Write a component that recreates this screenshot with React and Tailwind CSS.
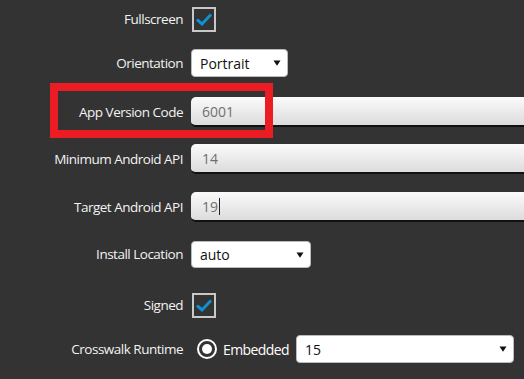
import React from 'react';

const font = { fontFamily: '"Open Sans", "Noto Sans", sans-serif' };

function Check() {
  return (
    <div className="w-[24px] h-[25px] border-2 border-[#c8c8c8] flex items-center justify-center ml-[1px]">
      <svg width="16" height="14" viewBox="0 0 16 14">
        <path d="M2 7.5 L6 11 L14 2.5" fill="none" stroke="#0e90d2" strokeWidth="3" strokeLinecap="square" />
      </svg>
    </div>
  );
}

function Arrow() {
  return (
    <svg width="8" height="6" viewBox="0 0 8 6" className="shrink-0">
      <path d="M0.5 0.5 L7.5 0.5 L4 5.8 Z" fill="#111" />
    </svg>
  );
}

function Select({ value, width, height = 'h-[28px]' }) {
  return (
    <div className={`${width} ${height} bg-white rounded-[4px] border border-[#bbb] flex items-center justify-between pl-[8px] pr-[6px] text-[14px] text-[#111]`}>
      <span>{value}</span>
      <Arrow />
    </div>
  );
}

function TextInput({ value, caret }) {
  return (
    <div className="flex-1 h-[30px] rounded-l-[5px] bg-gradient-to-b from-[#fbfbfb] to-[#dcdcdc] border-b-2 border-[#111] flex items-center pl-[11px] text-[14px] text-[#707070]">
      <span>{value}</span>
      {caret && <span className="w-[1px] h-[17px] bg-[#222] ml-[1px]" />}
    </div>
  );
}

function Row({ label, children, className = '' }) {
  return (
    <div className={`flex items-center ${className}`}>
      <div className="w-[184px] shrink-0 text-right pr-[1px] text-[13.5px] tracking-[-0.5px] text-[#f2f2f2]">{label}</div>
      <div className="flex-1 flex items-center pl-[7px]">{children}</div>
    </div>
  );
}

export default function App() {
  return (
    <div className="w-[524px] h-[379px] bg-[#333333] overflow-hidden" style={font}>
      <Row label="Fullscreen" className="pt-[7px] h-[32px]">
        <Check />
      </Row>
      <Row label="Orientation" className="mt-[17px] h-[28px]">
        <Select value="Portrait" width="w-[97px]" />
      </Row>
      <div className="relative mt-[20px]">
        <div className="absolute left-[50px] top-[-14px] w-[223px] h-[55px] border-[8px] border-[#ec1c24] pointer-events-none z-10" />
        <Row label="App Version Code" className="h-[30px]">
          <TextInput value="6001" />
        </Row>
      </div>
      <Row label="Minimum Android API" className="mt-[17px] h-[30px]">
        <TextInput value="14" />
      </Row>
      <Row label="Target Android API" className="mt-[18px] h-[30px]">
        <TextInput value="19" caret />
      </Row>
      <Row label="Install Location" className="mt-[19px] h-[27px]">
        <Select value="auto" width="w-[120px]" height="h-[27px]" />
      </Row>
      <Row label="Signed" className="mt-[25px] h-[25px]">
        <Check />
      </Row>
      <Row label="Crosswalk Runtime" className="mt-[17px] h-[28px]">
        <div className="flex items-center">
          <div className="ml-[6px] w-[20px] h-[20px] rounded-full border-2 border-white flex items-center justify-center">
            <div className="w-[10px] h-[10px] rounded-full bg-white" />
          </div>
          <span className="ml-[6px] text-[14px] text-white tracking-[-0.6px]">Embedded</span>
          <div className="ml-[7px]">
            <Select value="15" width="w-[218px]" />
          </div>
        </div>
      </Row>
    </div>
  );
}
